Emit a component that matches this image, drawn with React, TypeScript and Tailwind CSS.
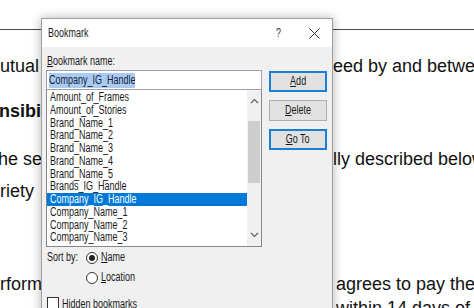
import React from 'react';

const bookmarks = [
  'Amount_of_Frames',
  'Amount_of_Stories',
  'Brand_Name_1',
  'Brand_Name_2',
  'Brand_Name_3',
  'Brand_Name_4',
  'Brand_Name_5',
  'Brands_IG_Handle',
  'Company_IG_Handle',
  'Company_Name_1',
  'Company_Name_2',
  'Company_Name_3',
];

const selected = 'Company_IG_Handle';

// dialog text in the shot is squeezed sideways, so narrow each label
function T({ children, center }: { children: React.ReactNode; center?: boolean }) {
  return (
    <span
      className={`inline-block whitespace-nowrap scale-x-[0.72] ${center ? 'origin-center' : 'origin-left'}`}
    >
      {children}
    </span>
  );
}

function DocLine({ left, right, className }: { left?: React.ReactNode; right?: React.ReactNode; className: string }) {
  return (
    <div className={`flex h-[20px] leading-[20px] whitespace-nowrap ${className}`}>
      <div className="w-[41px] shrink-0 overflow-hidden">{left}</div>
      <div className="w-[292px] shrink-0" />
      <div className="flex-1 overflow-hidden">{right}</div>
    </div>
  );
}

function Chevron({ up }: { up?: boolean }) {
  return (
    <svg width="9" height="6" viewBox="0 0 9 6" className="mx-auto">
      <polyline
        points={up ? '1,5 4.5,1.5 8,5' : '1,1 4.5,4.5 8,1'}
        fill="none"
        stroke="#606060"
        strokeWidth="1.2"
      />
    </svg>
  );
}

function Radio({ checked }: { checked?: boolean }) {
  return (
    <div className="w-[12px] h-[12px] shrink-0 rounded-full border border-[#333] bg-white flex items-center justify-center">
      {checked && <div className="w-[6px] h-[6px] rounded-full bg-[#222]" />}
    </div>
  );
}

function DialogButton({ children, active }: { children: React.ReactNode; active?: boolean }) {
  return (
    <div
      className={`h-[21px] flex items-center justify-center bg-[#e1e1e1] ${
        active ? 'border-2 border-[#1a7fd4]' : 'border border-[#adadad]'
      }`}
    >
      <T center>{children}</T>
    </div>
  );
}

export default function App() {
  return (
    <div className="relative w-[474px] h-[308px] overflow-hidden bg-white text-[#111] font-['Liberation_Sans',sans-serif]">
      {/* document behind the dialog */}
      <div className="pt-[29px] text-[18px]">
        <div className="h-px bg-[#4a4a4a]" />
        <DocLine className="mt-[26px]" left="utual u" right="eed by and betwee" />
        <DocLine className="mt-[25px] font-bold" left={<span className="-ml-[1px]">nsibili</span>} />
        <DocLine className="mt-[28px]" left={<span className="-ml-[2px]">he se</span>} right="lly described below" />
        <DocLine
          className="mt-[12px]"
          left={<span className="underline decoration-[#7fa3de] decoration-2 underline-offset-[5px]">riety</span>}
        />
        <DocLine
          className="mt-[73px]"
          left="rform"
          right={
            <span className="ml-[3px]">
              <span className="underline decoration-[#7fa3de] decoration-2 underline-offset-[5px]">agrees</span> to pay the T
            </span>
          }
        />
        <DocLine className="mt-[4px]" right={<span className="ml-[3px]">within 14 days of the</span>} />
      </div>

      {/* Bookmark dialog */}
      <div className="absolute left-[41px] top-[18px] w-[292px] h-[300px] flex flex-col bg-[#f0f0f0] border border-[#a0a0a0] shadow-[0_0_10px_rgba(0,0,0,0.3)] text-[12.5px] text-[#1a1a1a]">
        <div className="h-[28px] shrink-0 bg-white flex items-center pl-[6px]">
          <T>Bookmark</T>
          <span className="ml-auto mr-[26px] text-[#333]">
            <T>?</T>
          </span>
          <svg width="11" height="11" viewBox="0 0 11 11" className="mr-[12px]">
            <path d="M0.5 0.5 L10.5 10.5 M10.5 0.5 L0.5 10.5" stroke="#333" strokeWidth="1" />
          </svg>
        </div>

        <div className="flex-1 pl-[4px] pr-[5px] pt-[7px]">
          <div className="h-[14px] leading-[14px] pl-[1px]">
            <T>
              <u>B</u>ookmark name:
            </T>
          </div>
          <div className="mt-[2px] flex gap-[7px]">
            <div className="w-[216px] shrink-0">
              <div className="h-[20px] bg-white border border-[#9aa2b0] flex items-center pl-[2px]">
                <span className="bg-[#a9cbf1] text-[#14203a] leading-[15px] w-[86px] overflow-hidden">
                  <T>{selected}</T>
                </span>
              </div>
              <div className="h-[157px] bg-white border border-t-0 border-[#828790] flex">
                <div className="flex-1 pt-[1px]">
                  {bookmarks.map((b) => (
                    <div
                      key={b}
                      className={`h-[12.75px] leading-[12.75px] pl-[3px] ${
                        b === selected ? 'bg-[#0078d7] text-white' : ''
                      }`}
                    >
                      <T>{b}</T>
                    </div>
                  ))}
                </div>
                <div className="w-[14px] shrink-0 bg-[#f0f0f0] flex flex-col">
                  <div className="h-[18px] flex items-center pt-[3px]">
                    <Chevron up />
                  </div>
                  <div className="mt-[13px] mx-[1px] h-[62px] bg-[#cdcdcd]" />
                  <div className="mt-auto h-[18px] flex items-center pb-[4px]">
                    <Chevron />
                  </div>
                </div>
              </div>
            </div>
            <div className="flex-1 pt-[1px] flex flex-col gap-[8px]">
              <DialogButton active>
                <u>A</u>dd
              </DialogButton>
              <DialogButton>
                <u>D</u>elete
              </DialogButton>
              <DialogButton active>
                <u>G</u>o To
              </DialogButton>
            </div>
          </div>

          <div className="mt-[4px] flex items-center h-[13px] pl-[1px]">
            <span className="w-[39px] shrink-0">
              <T>Sort by:</T>
            </span>
            <Radio checked />
            <span className="ml-[3px]">
              <T>
                <u>N</u>ame
              </T>
            </span>
          </div>
          <div className="mt-[7px] flex items-center h-[13px] pl-[40px]">
            <Radio />
            <span className="ml-[3px]">
              <T>
                <u>L</u>ocation
              </T>
            </span>
          </div>
          <div className="mt-[13px] flex items-start h-[13px] pl-[1px]">
            <div className="w-[12px] h-[12px] shrink-0 border border-[#333] bg-white" />
            <span className="ml-[3px] leading-[14px]">
              <T>Hidden bookmarks</T>
            </span>
          </div>
        </div>
      </div>
    </div>
  );
}
